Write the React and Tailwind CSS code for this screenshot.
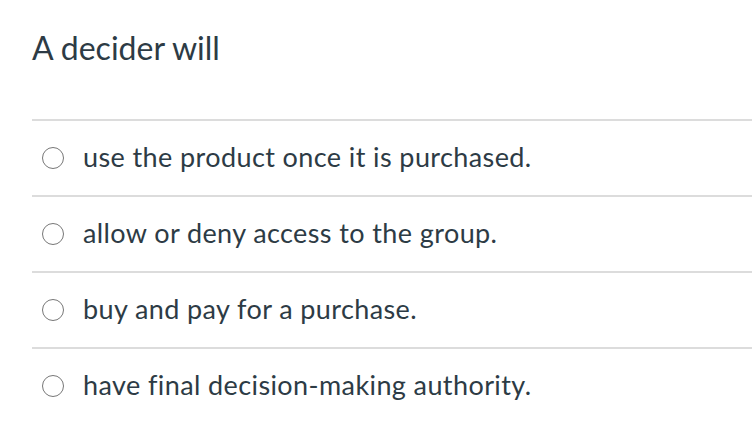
import React from "react";

const options = [
  "use the product once it is purchased.",
  "allow or deny access to the group.",
  "buy and pay for a purchase.",
  "have final decision-making authority.",
];

export default function App() {
  return (
    <div className="w-[752px] h-[444px] bg-white overflow-hidden pl-[32px] text-[#2d3b45]" style={{ fontFamily: "Lato, 'Liberation Sans', sans-serif" }}>
      <div className="pt-[28px] h-[119px] text-[32px] leading-[40px]">A decider will</div>
      <div>
        {options.map((o, i) => (
          <div key={i} className="h-[76px] border-t-2 border-[#dcdcdc] flex items-center">
            <span className="ml-[10px] w-[22px] h-[22px] rounded-full border-[1.5px] border-[#777] shrink-0" />
            <span className="ml-[19px] text-[27px] leading-[30px] tracking-[0.4px] -mt-[2px]">{o}</span>
          </div>
        ))}
      </div>
    </div>
  );
}
